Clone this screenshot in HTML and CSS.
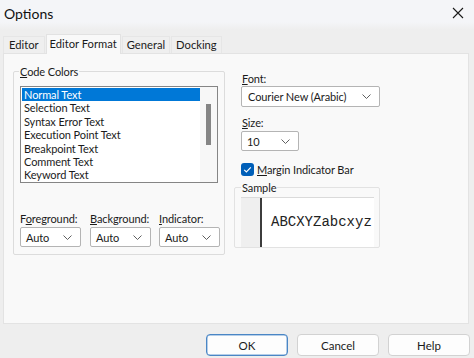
FILE: index.html
```html
<!DOCTYPE html>
<html>
<head>
<meta charset="utf-8">
<link rel="stylesheet" href="styles.css">
</head>
<body>
<div class="window">
  <div class="titlebar">
    <span class="title">Options</span>
    <svg class="close" width="12" height="12" viewBox="0 0 12 12"><path d="M1 1L11 11M11 1L1 11" stroke="#1a1a1a" stroke-width="1.1" fill="none"/></svg>
  </div>
  <div class="tabs">
    <div class="tab">Editor</div>
    <div class="tab active">Editor Format</div>
    <div class="tab">General</div>
    <div class="tab">Docking</div>
  </div>
  <div class="panel">
    <fieldset class="group codecolors">
      <legend><u>C</u>ode Colors</legend>
      <div class="listbox">
        <ul class="items">
          <li class="sel">Normal Text</li>
          <li>Selection Text</li>
          <li>Syntax Error Text</li>
          <li>Execution Point Text</li>
          <li>Breakpoint Text</li>
          <li>Comment Text</li>
          <li>Keyword Text</li>
        </ul>
        <div class="scrollbar"><div class="thumb"></div></div>
      </div>
      <div class="pickers">
        <div class="picker">
          <label>F<u>o</u>reground:</label>
          <div class="combo small"><span>Auto</span><svg class="chev" width="9" height="5" viewBox="0 0 9 5"><path d="M0.5 0.5L4.5 4.5L8.5 0.5" stroke="#5f5f5f" fill="none"/></svg></div>
        </div>
        <div class="picker">
          <label><u>B</u>ackground:</label>
          <div class="combo small"><span>Auto</span><svg class="chev" width="9" height="5" viewBox="0 0 9 5"><path d="M0.5 0.5L4.5 4.5L8.5 0.5" stroke="#5f5f5f" fill="none"/></svg></div>
        </div>
        <div class="picker">
          <label><u>I</u>ndicator:</label>
          <div class="combo small"><span>Auto</span><svg class="chev" width="9" height="5" viewBox="0 0 9 5"><path d="M0.5 0.5L4.5 4.5L8.5 0.5" stroke="#5f5f5f" fill="none"/></svg></div>
        </div>
      </div>
    </fieldset>
    <div class="right">
      <label class="lbl"><u>F</u>ont:</label>
      <div class="combo font"><span>Courier New (Arabic)</span><svg class="chev" width="9" height="5" viewBox="0 0 9 5"><path d="M0.5 0.5L4.5 4.5L8.5 0.5" stroke="#5f5f5f" fill="none"/></svg></div>
      <label class="lbl size-lbl"><u>S</u>ize:</label>
      <div class="combo size"><span>10</span><svg class="chev" width="9" height="5" viewBox="0 0 9 5"><path d="M0.5 0.5L4.5 4.5L8.5 0.5" stroke="#5f5f5f" fill="none"/></svg></div>
      <div class="check">
        <span class="box"><svg width="13" height="13" viewBox="0 0 13 13"><path d="M3.2 6.8L5.4 9L9.8 4.3" stroke="#fff" stroke-width="1.2" fill="none"/></svg></span>
        <span><u>M</u>argin Indicator Bar</span>
      </div>
      <fieldset class="group sample">
        <legend>Sample</legend>
        <div class="sample-area">
          <div class="gutter"></div>
          <div class="code">ABCXYZabcxyz</div>
        </div>
      </fieldset>
    </div>
  </div>
  <div class="footer">
    <button class="btn default">OK</button>
    <button class="btn">Cancel</button>
    <button class="btn">Help</button>
  </div>
</div>
</body>
</html>
```
FILE: styles.css
```css
* { box-sizing: border-box; }
html, body { margin: 0; padding: 0; }
body {
  width: 474px;
  height: 358px;
  overflow: hidden;
  font-family: Lato, "Open Sans", sans-serif;
  font-size: 11px;
  color: #1b1b1b;
  background: #eeeeee;
}
.window {
  width: 474px;
  height: 358px;
  display: flex;
  flex-direction: column;
  background: #eeeeee;
}
.titlebar {
  height: 30px;
  display: flex;
  align-items: center;
  justify-content: space-between;
  padding: 0 10px 4px 4px;
  background: linear-gradient(#f4f5f8 0, #f4f5f8 22px, #eeeeee 30px);
}
.title {
  font-size: 14px;
  color: #111;
}
.close { display: block; }
.tabs {
  display: flex;
  align-items: flex-end;
  height: 23px;
  padding-left: 3px;
}
.tab {
  height: 17px;
  padding: 0 4px;
  line-height: 16px;
  font-size: 11.2px;
  background: #efefef;
  border: 1px solid #e6e6e6;
  border-bottom: none;
  margin-right: 1px;
}
.tab:first-child { padding: 0 5px; }
.tab.active {
  height: 20px;
  line-height: 18px;
  padding: 0 3px;
  background: #f9f9f9;
  border-color: #e2e2e2;
  position: relative;
  top: 1px;
}
.panel {
  height: 271px;
  margin: 0 5px 0 3px;
  background: #f9f9f9;
  border: 1px solid #e3e3e3;
  display: flex;
  padding: 10px 0 0 9px;
  gap: 16px;
  align-items: flex-start;
}
.group {
  margin: 0;
  border: 1px solid #dcdcdc;
  border-radius: 2px;
  min-width: 0;
}
.group legend {
  padding: 0 1px;
  margin-left: -1px;
  line-height: 15px;
  font-size: 11px;
  letter-spacing: -0.1px;
}
.codecolors {
  width: 212px;
  height: 191px;
  padding: 7px 6px 0 6px;
}
.listbox {
  width: 198px;
  height: 97px;
  border: 1px solid #858585;
  background: #fff;
  display: flex;
  padding: 1px 0 0 1px;
}
.items {
  list-style: none;
  margin: 0;
  padding: 0;
  flex: 1;
}
.items li {
  height: 13.4px;
  line-height: 13.4px;
  padding-left: 2px;
  font-size: 11px;
  letter-spacing: -0.1px;
  white-space: nowrap;
}
.items li.sel {
  background: #0078d7;
  color: #fff;
}
.scrollbar {
  width: 17px;
  margin-top: -1px;
  background: #f7f7f7;
  padding: 17px 0 0 6px;
}
.thumb {
  width: 5px;
  height: 41px;
  background: #858585;
}
.pickers {
  display: flex;
  margin-top: 28px;
}
.picker {
  display: flex;
  flex-direction: column;
  width: 61px;
  margin-right: 8px;
}
.picker:first-child { margin-right: 9px; }
.picker:last-child { margin-right: 0; }
.picker label {
  line-height: 15px;
  height: 15px;
  font-size: 11px;
  letter-spacing: -0.1px;
  margin-bottom: 1px;
  white-space: nowrap;
}
.combo {
  height: 20px;
  background: #fff;
  border: 1px solid #b4b4b4;
  border-radius: 2px;
  display: flex;
  align-items: center;
  justify-content: space-between;
  padding: 0 8px 0 5px;
  font-size: 11px;
  letter-spacing: -0.1px;
  white-space: nowrap;
}
.combo.small { width: 61px; }
.chev { display: block; flex: none; }
.right {
  width: 139px;
  display: flex;
  flex-direction: column;
  padding-top: 7px;
}
.lbl {
  line-height: 15px;
  font-size: 11px;
  letter-spacing: -0.1px;
  padding-left: 1px;
}
.combo.font {
  width: 139px;
  height: 21px;
  padding-left: 6px;
}
.size-lbl { margin-top: 8px; }
.combo.size {
  width: 58px;
  height: 20px;
  margin-top: 1px;
}
.check {
  display: flex;
  align-items: center;
  gap: 3px;
  margin-top: 11px;
  font-size: 11px;
  letter-spacing: -0.1px;
  line-height: 15px;
}
.check .box {
  width: 13px;
  height: 13px;
  background: #005fb8;
  border-radius: 3px;
  display: block;
}
.check .box svg { display: block; }
.sample {
  width: 146px;
  height: 68px;
  margin-left: -7px;
  margin-top: 3px;
  padding: 2px 5px 0 6px;
  border-color: #e2e2e2;
}
.sample legend { margin-left: 0; }
.sample-area {
  height: 50px;
  width: 133px;
  background: #fff;
  border-top: 1px solid #dadada;
  display: flex;
}
.gutter {
  width: 21px;
  background: #efefef;
  border-right: 2px solid #3c3c3c;
}
.code {
  font-family: "Liberation Mono", "Courier New", monospace;
  font-size: 14px;
  line-height: 16px;
  padding: 16px 0 0 9px;
  color: #222;
  white-space: nowrap;
}
.footer {
  flex: 1;
  display: flex;
  justify-content: flex-end;
  align-items: flex-start;
  gap: 9px;
  padding: 10px 4px 0 0;
}
.btn {
  width: 82px;
  height: 22px;
  font-family: Lato, "Open Sans", sans-serif;
  font-size: 11.5px;
  color: #1b1b1b;
  background: #fdfdfd;
  border: 1px solid #d2d2d2;
  border-radius: 4px;
  padding: 0;
}
.btn.default {
  border-color: #4a86c5;
  box-shadow: inset 0 0 0 0.5px #6f9fd3;
}
```
